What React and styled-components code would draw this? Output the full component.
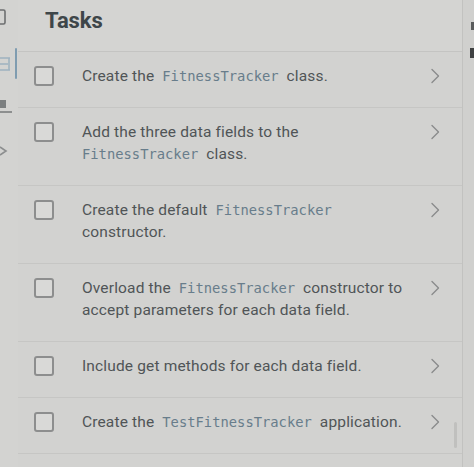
import React from "react";
import styled, { createGlobalStyle } from "styled-components";

const Global = createGlobalStyle`
  html, body { margin: 0; padding: 0; background: #d2d2d0; }
  body { font-family: Roboto, "Noto Sans", Arial, sans-serif; }
`;

const Screen = styled.div`
  width: 474px;
  height: 467px;
  display: flex;
  background: #d2d2d0;
  overflow: hidden;
  position: relative;
`;

const Sidebar = styled.div`
  width: 18px;
  flex: none;
  display: flex;
  flex-direction: column;
  position: relative;
  background: #d3d3d1;
`;

const SideIcon = styled.div`
  height: ${(p) => p.$h}px;
  margin-top: ${(p) => p.$mt}px;
  display: flex;
  align-items: center;
  overflow: hidden;
  width: 12px;
`;

const Accent = styled.div`
  position: absolute;
  left: 15px;
  top: 48px;
  width: 2px;
  height: 31px;
  background: #7f9cb0;
  border-radius: 1px;
`;

const Panel = styled.div`
  flex: 1;
  display: flex;
  flex-direction: column;
  border-right: 1px solid #c2c2c0;
  position: relative;
`;

const Header = styled.div`
  height: 52px;
  box-sizing: border-box;
  padding: 6px 0 0 27px;
  border-bottom: 1px solid #c4c4c2;
  background: #d4d4d2;
`;

const Title = styled.h1`
  margin: 0;
  font-size: 22px;
  line-height: 30px;
  font-weight: 700;
  color: #3e4649;
  letter-spacing: -0.1px;
`;

const List = styled.ul`
  list-style: none;
  margin: 0;
  padding: 0;
`;

const Row = styled.li`
  display: grid;
  grid-template-columns: 20px 328px 1fr;
  column-gap: 28px;
  padding: 13px 0 20px 16px;
  border-bottom: 1px solid #c6c6c4;
  align-items: start;
`;

const Check = styled.span`
  width: 20px;
  height: 20px;
  box-sizing: border-box;
  border: 2px solid #8d8e8e;
  border-radius: 3px;
  background: #d9d9d7;
  margin-top: 1px;
`;

const Text = styled.div`
  font-size: 15.5px;
  line-height: 22px;
  letter-spacing: 0.15px;
  color: #505557;
`;

const Code = styled.code`
  font-family: "DejaVu Sans Mono", "Liberation Mono", monospace;
  font-size: 13.8px;
  letter-spacing: 0;
  color: #687d8b;
  margin: 0 4px 0 ${(p) => (p.$tight ? 0 : 4)}px;
`;

const Chevron = styled.span`
  display: flex;
  align-items: center;
  height: 22px;
  margin-left: -8px;
`;

const RightStrip = styled.div`
  width: 11px;
  flex: none;
  display: flex;
  flex-direction: column;
  align-items: flex-end;
  background: #d0d0ce;
`;

const Mark = styled.span`
  width: ${(p) => p.$w}px;
  height: ${(p) => p.$h}px;
  margin-top: ${(p) => p.$mt}px;
  background: ${(p) => p.$c};
`;

const Thumb = styled.div`
  position: absolute;
  right: 5px;
  top: 422px;
  width: 3px;
  height: 26px;
  background: #c0c0be;
  border-radius: 2px;
`;

const ChevronIcon = () => (
  <svg width="10" height="16" viewBox="0 0 10 16" fill="none">
    <path d="M2 1.5l6.5 6.5-6.5 6.5" stroke="#8a8b8b" strokeWidth="1.4" strokeLinecap="round" strokeLinejoin="round" />
  </svg>
);

const tasks = [
  <>Create the <Code>FitnessTracker</Code> class.</>,
  <>Add the three data fields to the <Code $tight>FitnessTracker</Code> class.</>,
  <>Create the default <Code>FitnessTracker</Code> constructor.</>,
  <>Overload the <Code>FitnessTracker</Code> constructor to accept parameters for each data field.</>,
  <>Include get methods for each data field.</>,
  <>Create the <Code>TestFitnessTracker</Code> application.</>,
];

export default function App() {
  return (
    <>
      <Global />
      <Screen>
        <Sidebar>
          <SideIcon $h={18} $mt={8}>
            <svg width="12" height="18" viewBox="0 0 12 18">
              <rect x="-6" y="2" width="11" height="14" rx="1.5" fill="none" stroke="#6d6f70" strokeWidth="1.6" />
            </svg>
          </SideIcon>
          <SideIcon $h={20} $mt={28}>
            <svg width="12" height="20" viewBox="0 0 12 20">
              <path d="M-2 4h12M-2 10h10M-2 16h12M9 4v12" stroke="#9fb3c0" strokeWidth="1.6" fill="none" />
            </svg>
          </SideIcon>
          <SideIcon $h={16} $mt={24}>
            <svg width="12" height="16" viewBox="0 0 12 16">
              <rect x="-4" y="2" width="10" height="8" fill="#7c7f80" />
              <path d="M-4 14h16" stroke="#6f7273" strokeWidth="1.4" />
            </svg>
          </SideIcon>
          <SideIcon $h={14} $mt={30}>
            <svg width="12" height="14" viewBox="0 0 12 14">
              <path d="M0 3l6 4-6 4" stroke="#8c8e8f" strokeWidth="1.6" fill="none" />
            </svg>
          </SideIcon>
          <Accent />
        </Sidebar>
        <Panel>
          <Header>
            <Title>Tasks</Title>
          </Header>
          <List>
            {tasks.map((content, i) => (
              <Row key={i}>
                <Check />
                <Text>{content}</Text>
                <Chevron>
                  <ChevronIcon />
                </Chevron>
              </Row>
            ))}
          </List>
          <Thumb />
        </Panel>
        <RightStrip>
          <Mark $w={3} $h={8} $mt={22} $c="#5a5c5d" />
          <Mark $w={4} $h={10} $mt={18} $c="#3f4142" />
        </RightStrip>
      </Screen>
    </>
  );
}
